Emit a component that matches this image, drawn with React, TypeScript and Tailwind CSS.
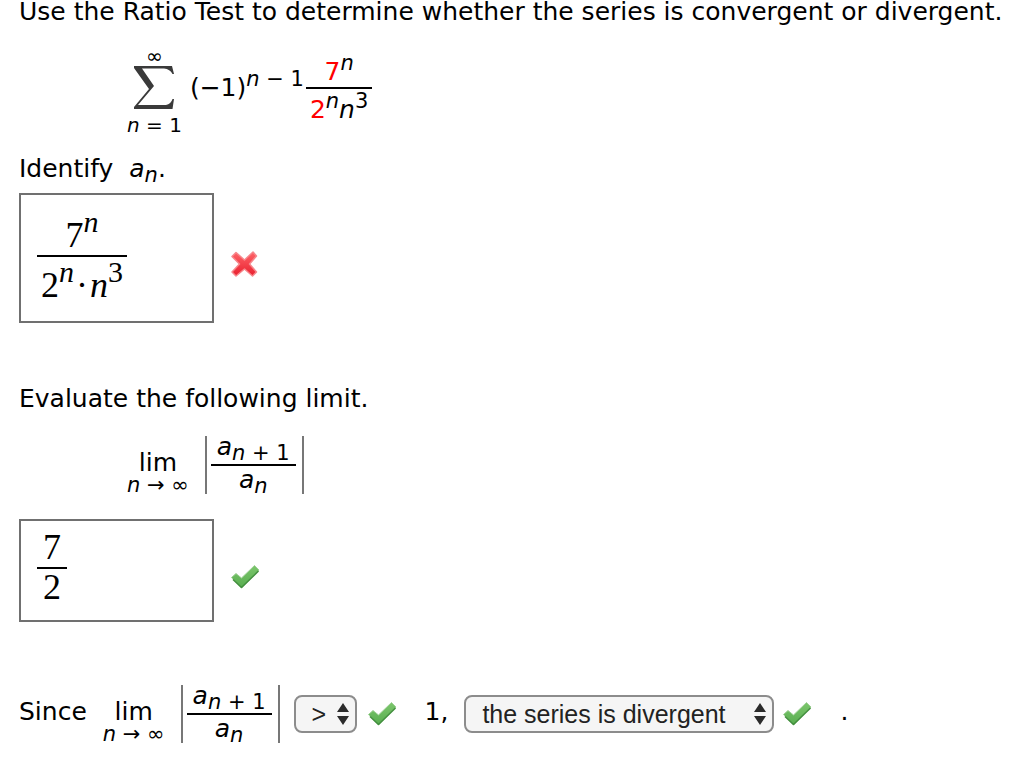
import React, { useState } from "react";

const N = () => <i>n</i>;

const Sup = ({ children }: { children: React.ReactNode }) => (
    <sup className="text-[21px] leading-0">{children}</sup>
);

const Sub = ({ children }: { children: React.ReactNode }) => (
    <sub className="text-[21px] leading-0">{children}</sub>
);

const Sigma = () => (
    <svg viewBox="0 0 40 46" className="w-10 h-[46px]" aria-hidden="true">
        <path
            d="M0 2H38L40 10H38.500Q36 5 30 4.500H8L20 22 4 41H32Q37 40 38.500 35H40L38.500 45H0V43L15 25 0 4Z"
            fill="#3a3a3a"
        />
    </svg>
);

const CheckMark = () => (
    <svg viewBox="0 0 30 26" className="w-[30px] h-[26px] shrink-0" role="img" aria-label="Correct">
        <defs>
            <linearGradient id="green" x1="0" y1="0" x2="0" y2="1">
                <stop offset="0" stopColor="#7cc66c" />
                <stop offset="1" stopColor="#58ad50" />
            </linearGradient>
        </defs>
        <path
            d="M1.500 13.500 6 9.500 11.500 14 24.500 1.500 29 6 11.500 24Z"
            fill="url(#green)"
            stroke="#9fd196"
            strokeWidth="1"
            strokeLinejoin="round"
        />
        <path
            d="M3 15.500 11.500 23.500 28.500 7"
            fill="none"
            stroke="#438f3f"
            strokeWidth="1.500"
            strokeLinejoin="round"
        />
    </svg>
);

const CrossMark = () => (
    <svg viewBox="0 0 28 28" className="w-7 h-7 shrink-0" role="img" aria-label="Incorrect">
        <defs>
            <linearGradient id="red" x1="0" y1="0" x2="0" y2="1">
                <stop offset="0" stopColor="#ff6468" />
                <stop offset="1" stopColor="#e9202f" />
            </linearGradient>
        </defs>
        <path
            d="M6 2.500 14.500 10 23 2 26.500 6 19.500 14 26.500 22 22.500 26 14.500 19 6 26 2 22 9.500 14 2 6.500Z"
            fill="url(#red)"
            stroke="#f7868b"
            strokeWidth="1.500"
            strokeLinejoin="round"
        />
    </svg>
);

const RatioLimit = () => (
    <div className="flex items-center gap-4">
        <div className="flex flex-col items-center pt-4">
            <span className="leading-6">lim</span>
            <span className="text-[21px] leading-5">
                <N /> → ∞
            </span>
        </div>
        <div className="flex border-x-2 border-[#777777] pl-1 pr-1.5">
            <div className="flex flex-col items-center">
                <span className="px-1.5 pb-1.5 leading-[22px]">
                    <i>a</i>
                    <Sub>
                        <N /> + 1
                    </Sub>
                </span>
                <span className="h-0.5 w-full bg-black" />
                <span className="leading-7">
                    <i>a</i>
                    <Sub>
                        <N />
                    </Sub>
                </span>
            </div>
        </div>
    </div>
);

type DropdownProps = {
    label: string;
    options: string[];
    initial: string;
    className: string;
};

const Dropdown = ({ label, options, initial, className }: DropdownProps) => {
    const [value, setValue] = useState(initial);

    return (
        <div className="relative shrink-0">
            <select
                aria-label={label}
                value={value}
                onChange={(e) => setValue(e.target.value)}
                className={`appearance-none h-[38px] rounded-lg border-2 border-[#8c8c8c] bg-[#f5f5f5] pl-4 font-['Liberation_Sans',sans-serif] leading-7 text-[#222222] ${className}`}
            >
                {options.map((option) => (
                    <option key={option}>{option}</option>
                ))}
            </select>
            <svg
                viewBox="0 0 12 22"
                className="absolute right-2 top-2 w-3 h-[22px] pointer-events-none"
                aria-hidden="true"
            >
                <path d="M6 0 12 9H0ZM6 22 0 13H12Z" fill="#2b2b2b" />
            </svg>
        </div>
    );
};

export default function App() {
    return (
        <main className="min-h-screen bg-white pl-[19px] font-['DejaVu_Sans',sans-serif] text-[25px] leading-6 text-black">
            <p className="whitespace-nowrap">
                Use the Ratio Test to determine whether the series is convergent or divergent.
            </p>

            <div className="mt-4 flex items-center pl-[108px]">
                <div className="flex flex-col items-center text-xl">
                    <span className="pt-2 leading-4">∞</span>
                    <Sigma />
                    <span className="mt-1 leading-[22px]">
                        <N /> = 1
                    </span>
                </div>
                <span className="pl-2">
                    (−1)
                    <Sup>
                        <N /> − 1
                    </Sup>
                </span>
                <div className="ml-0.5 flex flex-col items-center">
                    <span className="pt-1.5 pb-[3px]">
                        <span className="text-[#ff0000]">7</span>
                        <Sup>
                            <N />
                        </Sup>
                    </span>
                    <span className="h-0.5 w-full bg-black" />
                    <span className="px-1 pt-[9px]">
                        <span className="text-[#ff0000]">2</span>
                        <Sup>
                            <N />
                        </Sup>
                        <N />
                        <Sup>3</Sup>
                    </span>
                </div>
            </div>

            <p className="mt-[21px]">
                Identify&nbsp; <i>a</i>
                <Sub>
                    <N />
                </Sub>
                .
            </p>

            <div className="mt-3 flex items-center gap-4">
                <div className="flex h-[130px] w-[195px] items-center border-2 border-[#707070] pl-4 font-['Liberation_Serif',serif] text-4xl">
                    <div className="flex flex-col items-center leading-8">
                        <span className="pt-2 pb-1">
                            7
                            <sup className="text-3xl leading-0">
                                <N />
                            </sup>
                        </span>
                        <span className="h-0.5 w-full bg-black" />
                        <span className="px-1 pt-3 pb-1">
                            2
                            <sup className="text-3xl leading-0">
                                <N />
                            </sup>
                            <span className="px-0.5">·</span>
                            <N />
                            <sup className="text-3xl leading-0">3</sup>
                        </span>
                    </div>
                </div>
                <div className="mt-3">
                    <CrossMark />
                </div>
            </div>

            <p className="mt-16">Evaluate the following limit.</p>

            <div className="mt-6 pl-[108px]">
                <RatioLimit />
            </div>

            <div className="mt-6 flex items-center gap-4">
                <div className="flex h-[103px] w-[195px] items-center border-2 border-[#707070] pl-4 font-['Liberation_Serif',serif] text-4xl">
                    <div className="flex flex-col items-center pb-2 leading-8">
                        <span className="px-1.5 pb-1">7</span>
                        <span className="h-0.5 w-full bg-black" />
                        <span className="pt-0.5">2</span>
                    </div>
                </div>
                <div className="mt-3">
                    <CheckMark />
                </div>
            </div>

            <div className="mt-[62px] flex items-center">
                <span className="pr-4 pb-1">Since</span>
                <RatioLimit />
                <div className="flex items-center gap-2.5 pl-3.5">
                    <Dropdown
                        label="Comparison with 1"
                        options={["<", ">", "="]}
                        initial=">"
                        className="w-[63px]"
                    />
                    <CheckMark />
                </div>
                <span className="pl-7 pr-4 pb-1">1,</span>
                <div className="flex items-center gap-2">
                    <Dropdown
                        label="Conclusion"
                        options={[
                            "the series is convergent",
                            "the series is divergent",
                            "the test is inconclusive",
                        ]}
                        initial="the series is divergent"
                        className="w-[310px]"
                    />
                    <CheckMark />
                </div>
                <span className="pl-7 pb-1">.</span>
            </div>
        </main>
    );
}
